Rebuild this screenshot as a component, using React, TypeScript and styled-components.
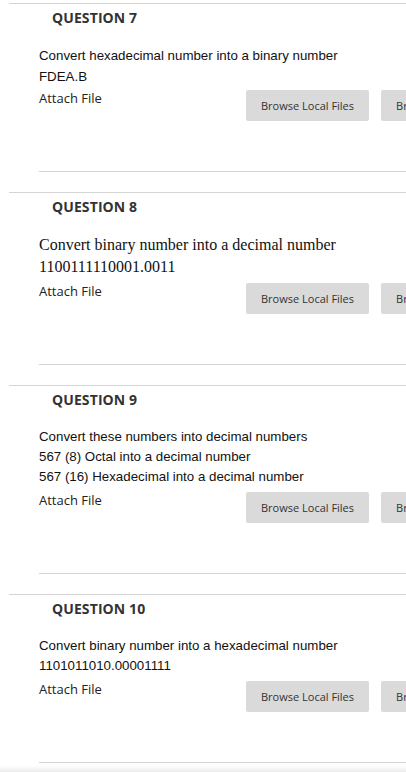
import React from "react";
import styled, { createGlobalStyle } from "styled-components";

const GlobalStyle = createGlobalStyle`
  html, body {
    margin: 0;
    padding: 0;
    background: #ffffff;
    overflow: hidden;
  }
  body {
    font-family: "Open Sans", "Liberation Sans", Arial, sans-serif;
    color: #222;
  }
`;

const Page = styled.main`
  width: 406px;
  padding-top: 3px;
  overflow: hidden;
`;

const Question = styled.section`
  margin-left: 9px;
  border-top: 1px solid #d4d4d4;
  padding-bottom: 20px;
`;

const Heading = styled.h3`
  margin: 0;
  padding: 4px 0 0 43px;
  font-family: "Open Sans", "Liberation Sans", sans-serif;
  font-weight: 700;
  font-size: 14px;
  line-height: 20px;
  color: #333333;
  letter-spacing: 0.1px;
`;

const Body = styled.div`
  margin-left: 30px;
  margin-top: 17px;
  padding-bottom: 50px;
  border-bottom: 1px solid #d4d4d4;
`;

const Prompt = styled.div<{ $serif?: boolean; $lh: number }>`
  font-family: ${(p) =>
    p.$serif
      ? `"Liberation Serif", "Times New Roman", serif`
      : `"Liberation Sans", Arial, sans-serif`};
  font-size: ${(p) => (p.$serif ? "16px" : "13.3px")};
  line-height: ${(p) => p.$lh}px;
  color: #111111;
`;

const Line = styled.div`
  white-space: nowrap;
`;

const AttachRow = styled.div<{ $gap: number }>`
  display: flex;
  align-items: flex-start;
  margin-top: ${(p) => p.$gap}px;
  white-space: nowrap;
`;

const AttachLabel = styled.div`
  width: 207px;
  flex: none;
  font-family: "Open Sans", "Liberation Sans", sans-serif;
  font-size: 13px;
  line-height: 20px;
  color: #222222;
`;

const Buttons = styled.div`
  display: flex;
  gap: 12px;
  margin-top: 2px;
  flex: none;
`;

const FileButton = styled.button`
  flex: none;
  height: 31px;
  padding: 0 15px;
  border: none;
  border-radius: 2px;
  background: #dadada;
  font-family: "Open Sans", "Liberation Sans", sans-serif;
  font-size: 11px;
  color: #333333;
  white-space: nowrap;
  cursor: pointer;
`;

const BottomShade = styled.div`
  position: fixed;
  left: 0;
  right: 0;
  bottom: 0;
  height: 6px;
  background: linear-gradient(to bottom, rgba(0, 0, 0, 0), rgba(0, 0, 0, 0.08));
`;

type Q = {
  n: number;
  lines: string[];
  serif?: boolean;
  lh: number;
  gap: number;
};

const questions: Q[] = [
  {
    n: 7,
    lines: ["Convert hexadecimal number into a binary number", "FDEA.B"],
    lh: 21,
    gap: 1,
  },
  {
    n: 8,
    lines: ["Convert binary number into a decimal number", "1100111110001.0011"],
    serif: true,
    lh: 22,
    gap: 3,
  },
  {
    n: 9,
    lines: [
      "Convert these numbers into decimal numbers",
      "567 (8) Octal into a decimal number",
      "567 (16) Hexadecimal into a decimal number",
    ],
    lh: 20,
    gap: 3,
  },
  {
    n: 10,
    lines: ["Convert binary number into a hexadecimal number", "1101011010.00001111"],
    lh: 20,
    gap: 3,
  },
];

export default function App() {
  return (
    <>
      <GlobalStyle />
      <Page>
        {questions.map((q) => (
          <Question key={q.n}>
            <Heading>QUESTION {q.n}</Heading>
            <Body>
              <Prompt $serif={q.serif} $lh={q.lh}>
                {q.lines.map((l) => (
                  <Line key={l}>{l}</Line>
                ))}
              </Prompt>
              <AttachRow $gap={q.gap}>
                <AttachLabel>Attach File</AttachLabel>
                <Buttons>
                  <FileButton type="button">Browse Local Files</FileButton>
                  <FileButton type="button">Browse Content Collection</FileButton>
                </Buttons>
              </AttachRow>
            </Body>
          </Question>
        ))}
      </Page>
      <BottomShade />
    </>
  );
}
